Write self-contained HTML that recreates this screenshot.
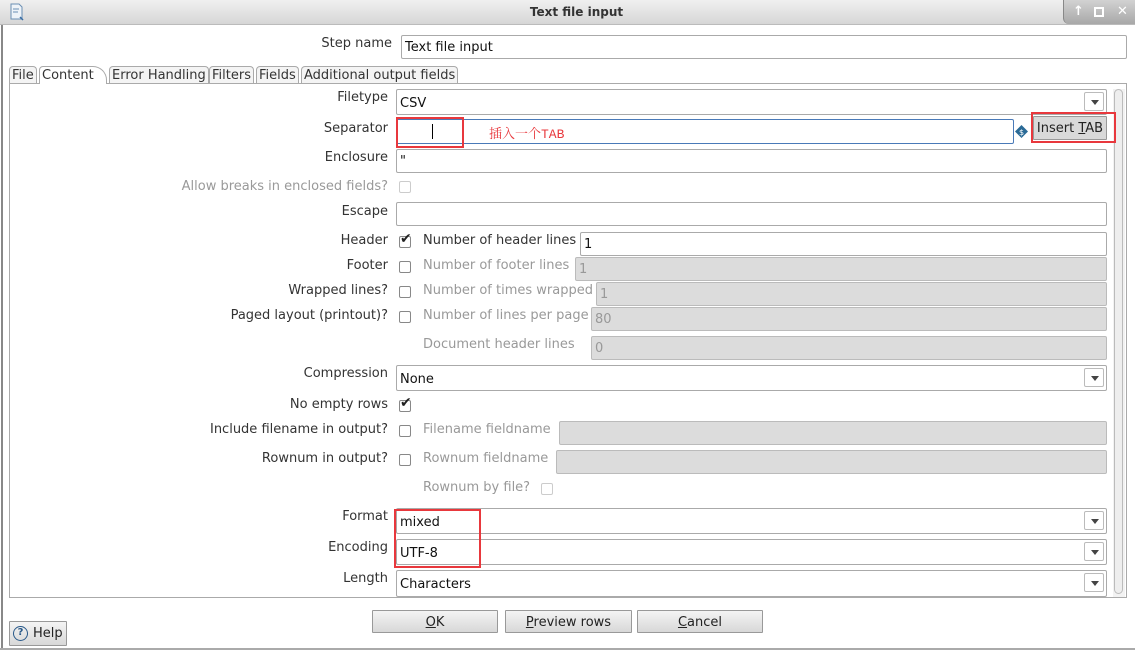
<!DOCTYPE html>
<html><head><meta charset="utf-8"><style>
*{box-sizing:border-box;margin:0;padding:0}
body{width:1135px;height:653px;position:relative;background:#fff;font-family:"DejaVu Sans","Liberation Sans",sans-serif;font-size:13px;color:#333;overflow:hidden}
.a{position:absolute}
.lbl{position:absolute;right:747px;white-space:nowrap;line-height:16px;margin-top:1px}
.g{color:#999}
.in{position:absolute;border:1px solid #aaa;background:#fff;border-radius:2px;padding-left:3px;padding-top:1px;line-height:22px;color:#111}
.dis{background:#dcdcdc;color:#999;border-color:#bbb}
.cb{position:absolute;width:12px;height:12px;border:1px solid #888;border-radius:2px;background:#fff}
.cbd{border-color:#ccc}
.dd{position:absolute;right:2px;top:2px;width:20px;height:19px;border:1px solid #bbb;border-radius:2px;background:#fff}
.dd:after{content:"";position:absolute;left:6px;top:7px;border-left:4px solid transparent;border-right:4px solid transparent;border-top:5px solid #444}
.btn{position:absolute;border:1px solid #999;background:linear-gradient(#f4f4f4,#d8d8d8);text-align:center;line-height:22px;color:#222;border-radius:1px}
.red{position:absolute;border:2px solid #e8383d}
.tab{position:absolute;top:66px;height:17px;border:1px solid #aaa;border-bottom:none;border-radius:4px 4px 0 0;padding:0 2px;line-height:17px;color:#333;background:#f4f4f4}
</style></head><body>
<div class="a" style="left:0;top:0;width:1135px;height:25px;background:linear-gradient(#f0f0f0,#d6d6d6);border-bottom:1px solid #bbb"></div>
<svg class="a" style="left:9px;top:3px" width="16" height="18"><path d="M2 1h8l3 3v12H2z" fill="#eef3f8" stroke="#6b8fb3"/><path d="M4 6h6M4 9h5" stroke="#6b8fb3"/><path d="M11 14l3 3" stroke="#3a6ea5" stroke-width="1.5"/></svg>
<div class="a" style="left:0;width:1135px;top:5px;text-align:center;font-weight:bold;font-size:12px;color:#333;padding-left:18px">Text file input</div>
<div class="a" style="left:1063px;top:0;width:72px;height:24px;background:linear-gradient(#d2d2d2,#a8a8a8);border-radius:0 0 0 6px;border-left:1px solid #888;color:#fff;font-size:13px;font-weight:bold;line-height:24px">
<span class="a" style="left:9px">↑</span><span class="a" style="left:30px;top:7px;width:10px;height:10px;border:2px solid #fff"></span><span class="a" style="left:53px">✕</span></div>
<div class="a" style="left:1px;top:25px;width:2px;height:625px;background:#888"></div>
<div class="a" style="left:0;top:648px;width:1135px;height:2px;background:#aaa"></div>

<div class="lbl" style="top:35px;right:743px">Step name</div>
<div class="in" style="left:401px;top:35px;width:726px;height:24px">Text file input</div>

<div class="tab" style="left:9px">File</div>
<div class="tab" style="left:39px;background:#fff;height:18px;z-index:2;border-radius:4px 14px 0 0;padding-right:12px">Content</div>
<div class="tab" style="left:109px">Error Handling</div>
<div class="tab" style="left:209px">Filters</div>
<div class="tab" style="left:256px">Fields</div>
<div class="tab" style="left:301px">Additional output fields</div>
<div class="a" style="left:9px;top:83px;width:1118px;height:515px;border:1px solid #aaa;background:#fff"></div>
<div class="a" style="left:1113px;top:89px;width:12px;height:508px;background:#f2f2f2"><div class="a" style="left:1px;top:0;width:9px;height:505px;border:1px solid #bbb;border-radius:5px;background:#eee"></div></div>

<div class="lbl" style="top:89px">Filetype</div>
<div class="in" style="left:396px;top:89px;width:711px;height:26px;line-height:25px">CSV<div class="dd"></div></div>
<div class="lbl" style="top:120px">Separator</div>
<div class="in" style="left:396px;top:119px;width:618px;height:25px;border-color:#4a7ab8"></div>
<div class="a" style="left:432px;top:124px;width:1px;height:15px;background:#000"></div>
<div class="red" style="left:396px;top:117px;width:68px;height:31px"></div>
<div class="a" style="left:489px;top:123px;color:#e8383d;font-size:13px;font-family:'Liberation Mono','Noto Serif CJK SC',monospace">插入一个TAB</div>
<svg class="a" style="left:1015px;top:125px" width="13" height="13"><path d="M6.5 0L13 6.5 6.5 13 0 6.5z" fill="#2a6a96"/><text x="4" y="10" font-size="8" fill="#fff" font-family="DejaVu Sans">$</text></svg>
<div class="btn" style="left:1033px;top:116px;width:74px;height:24px;background:#d9d9d9;line-height:24px">Insert <u>T</u>AB</div>
<div class="red" style="left:1031px;top:112px;width:85px;height:31px"></div>
<div class="lbl" style="top:149px">Enclosure</div>
<div class="in" style="left:396px;top:149px;width:711px;height:24px">"</div>
<div class="lbl g" style="top:178px">Allow breaks in enclosed fields?</div>
<div class="cb cbd" style="left:399px;top:181px"></div>
<div class="lbl" style="top:203px">Escape</div>
<div class="in" style="left:396px;top:202px;width:711px;height:24px"></div>
<div class="lbl" style="top:232px">Header</div>
<div class="cb" style="left:399px;top:236px"></div><div class="a" style="left:400px;top:231px;font-size:14px;color:#222">✔</div>
<div class="a" style="left:423px;top:233px">Number of header lines</div>
<div class="in" style="left:580px;top:232px;width:527px;height:24px">1</div>
<div class="lbl" style="top:257px">Footer</div>
<div class="cb" style="left:399px;top:261px"></div>
<div class="a g" style="left:423px;top:258px">Number of footer lines</div>
<div class="in dis" style="left:575px;top:257px;width:532px;height:24px">1</div>
<div class="lbl" style="top:282px">Wrapped lines?</div>
<div class="cb" style="left:399px;top:286px"></div>
<div class="a g" style="left:423px;top:283px">Number of times wrapped</div>
<div class="in dis" style="left:596px;top:282px;width:511px;height:24px">1</div>
<div class="lbl" style="top:307px">Paged layout (printout)?</div>
<div class="cb" style="left:399px;top:311px"></div>
<div class="a g" style="left:423px;top:308px">Number of lines per page</div>
<div class="in dis" style="left:591px;top:307px;width:516px;height:24px">80</div>
<div class="a g" style="left:423px;top:337px">Document header lines</div>
<div class="in dis" style="left:591px;top:336px;width:516px;height:24px">0</div>
<div class="lbl" style="top:365px">Compression</div>
<div class="in" style="left:396px;top:365px;width:711px;height:26px;line-height:25px">None<div class="dd"></div></div>
<div class="lbl" style="top:396px">No empty rows</div>
<div class="cb" style="left:399px;top:400px"></div><div class="a" style="left:400px;top:395px;font-size:14px;color:#222">✔</div>
<div class="lbl" style="top:421px">Include filename in output?</div>
<div class="cb" style="left:399px;top:425px"></div>
<div class="a g" style="left:423px;top:422px">Filename fieldname</div>
<div class="in dis" style="left:559px;top:421px;width:548px;height:24px"></div>
<div class="lbl" style="top:450px">Rownum in output?</div>
<div class="cb" style="left:399px;top:454px"></div>
<div class="a g" style="left:423px;top:451px">Rownum fieldname</div>
<div class="in dis" style="left:556px;top:450px;width:551px;height:24px"></div>
<div class="a g" style="left:423px;top:480px">Rownum by file?</div>
<div class="cb cbd" style="left:541px;top:483px"></div>
<div class="lbl" style="top:508px">Format</div>
<div class="in" style="left:396px;top:508px;width:711px;height:26px;line-height:25px">mixed<div class="dd"></div></div>
<div class="lbl" style="top:539px">Encoding</div>
<div class="in" style="left:396px;top:539px;width:711px;height:26px;line-height:25px">UTF-8<div class="dd"></div></div>
<div class="red" style="left:394px;top:509px;width:87px;height:59px"></div>
<div class="lbl" style="top:570px">Length</div>
<div class="in" style="left:396px;top:570px;width:711px;height:27px;line-height:25px">Characters<div class="dd"></div></div>

<div class="btn" style="left:372px;top:610px;width:126px;height:23px;line-height:23px"><u>O</u>K</div>
<div class="btn" style="left:505px;top:610px;width:127px;height:23px;line-height:23px"><u>P</u>review rows</div>
<div class="btn" style="left:637px;top:610px;width:126px;height:23px;line-height:23px"><u>C</u>ancel</div>
<div class="btn" style="left:9px;top:621px;width:58px;height:25px;text-align:left;padding-left:23px;line-height:24px">Help</div>
<div class="a" style="left:13px;top:626px;width:15px;height:15px;border:1.5px solid #2a5a8a;border-radius:50%;font-size:10px;line-height:12px;text-align:center;color:#2a5a8a;font-weight:bold">?</div>
</body></html>
